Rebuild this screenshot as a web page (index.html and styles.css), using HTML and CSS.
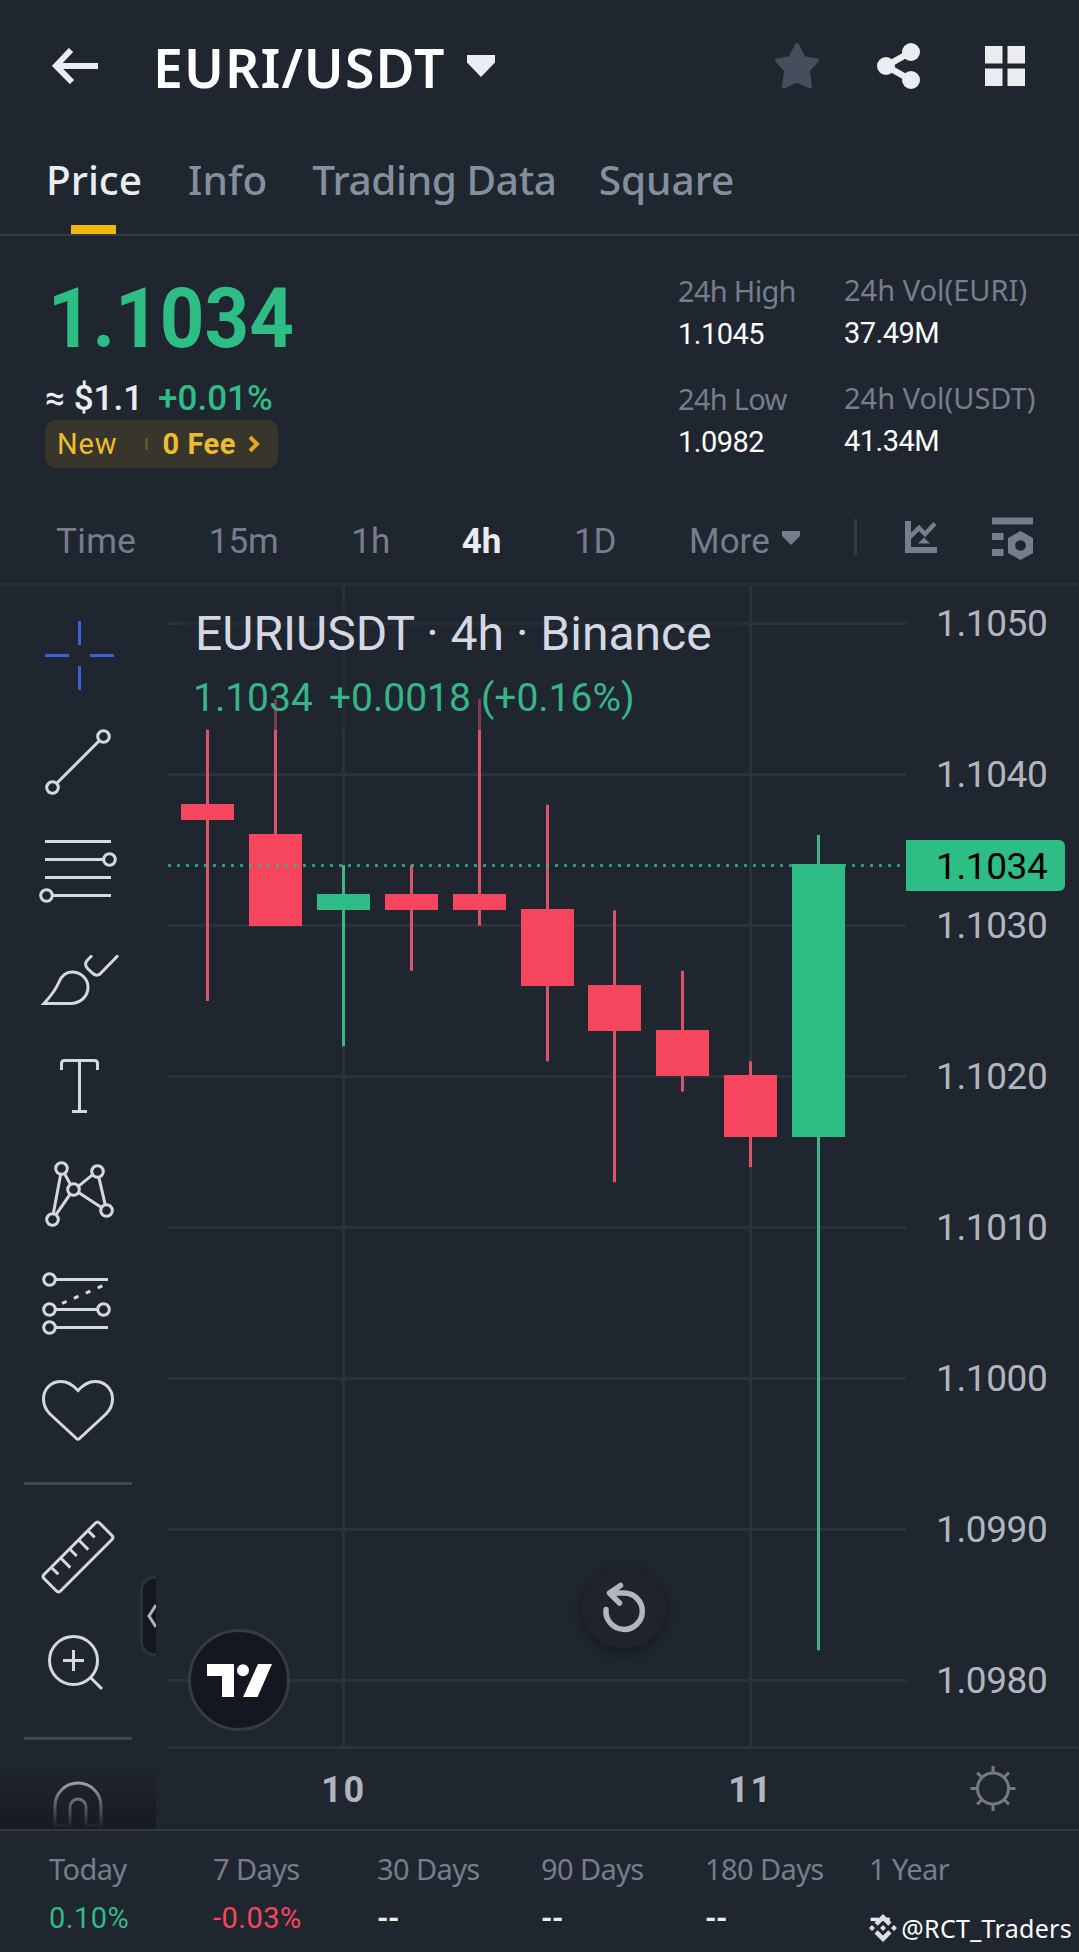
FILE: index.html
```
<!DOCTYPE html>
<html lang="en">
<head>
  <meta charset="UTF-8">
  <title>EURI/USDT</title>
  <link rel="stylesheet" href="styles.css">
</head>
<body>

  <header class="header">
    <svg class="back" width="46" height="36" viewBox="0 0 46 36">
      <path d="M19 2 L4 17.8 L20 34 M4 18 H46" fill="none" stroke="#eaecef" stroke-width="6"/>
    </svg>
    <h1>EURI/USDT</h1>
    <svg width="28" height="22" viewBox="0 0 28 22"><path d="M0 0h28v7.500L14 22 0 7.500z" fill="#eaecef"/></svg>
    <div class="actions">
      <svg width="44" height="46" viewBox="0 0 44 46">
        <path d="M22 2 L28.500 15 L42 17.500 L32.800 27.500 L35 43.500 L22 37.500 L9 43.500 L11.200 27.500 L2 17.500 L15.500 15Z" fill="#474d5c" stroke="#474d5c" stroke-width="4" stroke-linejoin="round"/>
      </svg>
      <svg width="43" height="46" viewBox="0 0 43 46">
        <path d="M34 9 L9 23 L34 37" fill="none" stroke="#eaecef" stroke-width="6.500"/>
        <circle cx="34" cy="9" r="9" fill="#eaecef"/>
        <circle cx="9" cy="23" r="9" fill="#eaecef"/>
        <circle cx="34" cy="37" r="9" fill="#eaecef"/>
      </svg>
      <svg class="grid-icon" width="40" height="40" viewBox="0 0 40 40">
        <path d="M0 0h17.500v17.500H0zM22.500 0H40v17.500H22.500zM0 22.500h17.500V40H0zM22.500 22.500H40V40H22.500z" fill="#eaecef"/>
      </svg>
    </div>
  </header>

  <nav class="tabs">
    <a class="active">Price</a>
    <a>Info</a>
    <a class="wide">Trading Data</a>
    <a>Square</a>
  </nav>

  <section class="summary">
    <div class="quote">
      <div class="last">1.1034</div>
      <div class="fiat"><span>≈ $1.1</span><span class="up">+0.01%</span></div>
      <div class="badge">
        <span class="badge-new">New</span>
        <i class="badge-sep"></i>
        <b>0 Fee</b>
        <svg width="12" height="18" viewBox="0 0 12 18"><path d="M2 2 L9 9 L2 16" fill="none" stroke="#e3a81d" stroke-width="4"/></svg>
      </div>
    </div>
    <div class="stats">
      <div class="stat"><label>24h High</label><b>1.1045</b></div>
      <div class="stat vol"><label>24h Vol(EURI)</label><b>37.49M</b></div>
      <div class="stat"><label>24h Low</label><b>1.0982</b></div>
      <div class="stat vol"><label>24h Vol(USDT)</label><b>41.34M</b></div>
    </div>
  </section>

  <div class="intervals">
    <a>Time</a>
    <a>15m</a>
    <a>1h</a>
    <a class="active">4h</a>
    <a>1D</a>
    <a class="more">More
      <svg width="18" height="14" viewBox="0 0 18 14"><path d="M0 0h18v5L9 14 0 5z" fill="#767d8c"/></svg>
    </a>
    <i class="divider"></i>
    <svg class="draw-icon" width="32" height="32" viewBox="0 0 32 32">
      <path d="M0 0h6v26h26v6H0z" fill="#767d8c"/>
      <path d="M5 16 L14 7 L20 13 L30 2.500" fill="none" stroke="#767d8c" stroke-width="4.500"/>
      <path d="M13 22.500 L19 16.500 L25 22.500z" fill="#767d8c"/>
    </svg>
    <svg class="settings-icon" width="41" height="43" viewBox="0 0 41 43">
      <path d="M0 .5h41v7H0zM0 16h11.500v7H0zM0 32h11.500v7H0z" fill="#767d8c"/>
      <path fill-rule="evenodd" d="M28.500 14 L41 21 V36 L28.500 43 L16 36 V21z M28.500 23.200a5.300 5.300 0 1 0 .01 0z" fill="#767d8c"/>
    </svg>
  </div>

  <main class="chart">
    <aside class="tools">
      <svg class="tool cross" viewBox="0 0 84 84"><path d="M43.500 9v24M43.500 54v24M9 43.500h24M54 43.500h24"/></svg>
      <svg class="tool" viewBox="0 0 84 84">
        <path d="M20.500 63.500 L63.500 20.500"/><circle cx="67.500" cy="16.500" r="5.800"/><circle cx="16.500" cy="67.500" r="5.800"/>
      </svg>
      <svg class="tool" viewBox="0 0 84 84">
        <path d="M9 13.500h66M9 31.500h58M9 49.500h66M17 67.500h58"/><circle cx="73.500" cy="31.500" r="5.800"/><circle cx="10.500" cy="67.500" r="5.800"/>
      </svg>
      <svg class="tool" viewBox="0 0 84 84">
        <path d="M8 67.500C14 61 20 53 23 46C26 39 30 36 36 36C45 36 52 43 52 51C52 60 45 67.500 34 67.500Z"/>
        <path d="M56 19.500l-3 3C48 27 49 30 52 33l5 4.500C60 40 63 39.500 65 37L82 19.500"/>
      </svg>
      <svg class="tool" viewBox="0 0 84 84">
        <path d="M25.500 26v-6.500q0-3 3-3h30q3 0 3 3V26M43.500 16.500V67M36 67.500h15"/>
      </svg>
      <svg class="tool" viewBox="0 0 84 84">
        <path d="M24.700 22.300 L17.300 61.700M28.500 21.500 L34.500 32.500M42.300 34.300 L56.700 22.700M34 42.300 L20 62.700M42.500 40.500 L65.500 55.500M62.800 25.200 L69.200 52.700"/>
        <circle cx="25.500" cy="16.500" r="5.800"/><circle cx="61.500" cy="19.500" r="5.800"/><circle cx="37.500" cy="37.500" r="5.800"/>
        <circle cx="16.500" cy="67.500" r="5.800"/><circle cx="70.500" cy="58.500" r="5.800"/>
      </svg>
      <svg class="tool" viewBox="0 0 84 84">
        <path d="M20 19.500h52M20 49.500h41M20 67.500h52"/>
        <path d="M26 43.500 L68 25" stroke-dasharray="5 8"/>
        <circle cx="13.500" cy="19.500" r="5.800"/><circle cx="13.500" cy="49.500" r="5.800"/><circle cx="13.500" cy="67.500" r="5.800"/><circle cx="67.500" cy="49.500" r="5.800"/>
      </svg>
      <svg class="tool" viewBox="0 0 84 84">
        <path d="M42 22.500C37 17 32 13.500 25 13.500C15 13.500 7.500 21 7.500 31C7.500 37 10 42 14 46L40.500 70.500q1.500 1.500 3 0L70 46C74 42 76.500 37 76.500 31C76.500 21 69 13.500 59 13.500C52 13.500 47 17 42 22.500Z"/>
      </svg>
      <hr>
      <svg class="tool" viewBox="0 0 84 84">
        <path d="M59.500 8 L8 59.500q-2 2 0 4L20.500 76q2 2 4 0L76 24.500q2-2 0-4L63.500 8q-2-2-4 0z"/>
        <path d="M15.700 52.700l6.600 6.600M25 43.300l9.300 9.300M34 34.300l6.700 6.700M43 25.300l9.300 9.300M52 15.700l6.700 6.700"/>
      </svg>
      <svg class="tool" viewBox="0 0 84 84">
        <circle cx="37.500" cy="37.500" r="24"/><path d="M54.500 54.500 L66 66M27 37.500h21M37.500 27v21"/>
      </svg>
      <hr>
      <svg class="tool" viewBox="0 0 84 84">
        <path d="M19 56V36a23 23 0 0 1 46 0V56H50V37a8 8 0 0 0-16 0V56Z"/>
      </svg>
      <div class="fade"></div>
      <div class="collapse">
        <svg width="12" height="24" viewBox="0 0 12 24"><path d="M10 1 L3 12 L10 23" fill="none" stroke="#b2b5be" stroke-width="3"/></svg>
      </div>
    </aside>

    <div class="plot">
      <svg id="chart" width="911" height="1243" viewBox="0 0 911 1243"></svg>
      <div class="legend">
        <div class="legend-title">EURIUSDT · 4h · Binance</div>
        <div class="legend-values"><span>1.1034</span><span>+0.0018</span><span class="pct">(+0.16%)</span></div>
      </div>
      <div class="tv-logo">
        <svg width="65" height="33" viewBox="0 0 65 33">
          <path d="M0 0h27v33H15V12H0zM51 0h14L50.500 33H36z" fill="#fff"/><circle cx="36" cy="6.200" r="6" fill="#fff"/>
        </svg>
      </div>
      <div class="reset">
        <svg width="84" height="84" viewBox="0 0 84 84">
          <path d="M24 44.500A18.200 18.200 0 1 0 42 28H29M38.500 20.500L27.500 28L37.500 38" fill="none" stroke="#b2b5be" stroke-width="5.500" stroke-linecap="round" stroke-linejoin="round"/>
        </svg>
      </div>
    </div>
  </main>

  <footer class="periods">
    <div><label>Today</label><span class="up">0.10%</span></div>
    <div><label>7 Days</label><span class="down">-0.03%</span></div>
    <div><label>30 Days</label><span class="empty">--</span></div>
    <div><label>90 Days</label><span class="empty">--</span></div>
    <div><label>180 Days</label><span class="empty">--</span></div>
    <div><label>1 Year</label><span class="empty">--</span></div>
    <div class="watermark">
      <svg width="28" height="28" viewBox="0 0 28 28" fill="#dcdee2">
        <path d="M14 0l8.500 8.500-3.200 3.200L14 6.400l-5.300 5.300-3.200-3.200zM14 28l8.500-8.500-3.200-3.200-5.300 5.300-5.300-5.300-3.200 3.200zM3 11l3 3-3 3-3-3zM25 11l3 3-3 3-3-3zM14 11l3 3-3 3-3-3z"/>
      </svg>
      @RCT_Traders
    </div>
  </footer>

  <script>
    const UP = "#2ebd85", DOWN = "#f6465d";
    // open, high, low, close
    const candles = [
      [1.1038, 1.1043, 1.1025, 1.1037],
      [1.1036, 1.1045, 1.1030, 1.1030],
      [1.1031, 1.1034, 1.1022, 1.1032],
      [1.1032, 1.1034, 1.1027, 1.1031],
      [1.1032, 1.1045, 1.1030, 1.1031],
      [1.1031, 1.1038, 1.1021, 1.1026],
      [1.1026, 1.1031, 1.1013, 1.1023],
      [1.1023, 1.1027, 1.1019, 1.1020],
      [1.1020, 1.1021, 1.1014, 1.1016],
      [1.1016, 1.1036, 1.0982, 1.1034]
    ];
    const days = [["10", 2], ["11", 8]];
    const last = 1.1034;

    const y = p => 37.5 + (1.105 - p) * 151000;
    const x = i => Math.round(39 + i * 67.9) + 0.5;
    let out = "";

    // grid
    for (let p = 11050; p >= 10980; p -= 10) {
      const gy = y(p / 10000);
      out += `<path class="grid" d="M0 ${gy}H738"/>`;
      out += `<text class="price" x="768" y="${gy + 12.5}">${(p / 10000).toFixed(4)}</text>`;
    }
    days.forEach(([label, i]) => {
      out += `<path class="grid" d="M${x(i)} 0V1161"/>`;
      out += `<text class="day" x="${x(i)}" y="1216">${label}</text>`;
    });
    out += `<path class="grid" d="M0 1161.5H911"/>`;

    // candles
    candles.forEach(([o, h, l, c], i) => {
      const up = c > o;
      const top = Math.round(y(Math.max(o, c))) - 1;
      const bottom = Math.round(y(Math.min(o, c)));
      out += `<rect x="${x(i) - 1.5}" y="${y(h)}" width="3" height="${y(l) - y(h)}" fill="${up ? "#3fb588" : "#d9566a"}"/>`;
      out += `<rect x="${x(i) - 26.5}" y="${top}" width="53" height="${bottom - top}" fill="${up ? UP : DOWN}"/>`;
    });

    // last price
    out += `<path class="last-line" d="M0 ${y(last) + 0.4}H735"/>`;
    out += `<path d="M738 254h153a6 6 0 0 1 6 6v39a6 6 0 0 1-6 6H738z" fill="${UP}"/>`;
    out += `<text class="price current" x="768" y="293">${last}</text>`;

    // axis settings
    out += `<g class="sun" transform="translate(825 1202.500)"><circle r="15.500"/>`;
    for (let a = 0; a < 360; a += 45) {
      out += `<path d="M0 -16V-22.500" transform="rotate(${a})"/>`;
    }
    out += `</g>`;

    document.getElementById("chart").innerHTML = out;
  </script>

</body>
</html>
```
FILE: styles.css
```
* {
  box-sizing: border-box;
}

body {
  margin: 0;
  width: 1079px;
  height: 1952px;
  overflow: hidden;
  background: #1f262f;
  color: #eaecef;
  font-family: Roboto, sans-serif;
}

svg {
  display: block;
  flex: none;
}

.up { color: #2ebd85; }
.down { color: #f6465d; }

/* header */

.header {
  display: flex;
  align-items: center;
  height: 132px;
  padding: 0 54px 0 52px;
}

.header h1 {
  margin: 3px 21px 0 55px;
  font: 600 53.5px/60px "Noto Sans", sans-serif;
  letter-spacing: 1.1px;
  color: #fff;
}

.actions {
  display: flex;
  align-items: center;
  gap: 58px;
  margin-left: auto;
}

.grid-icon {
  margin-left: 7px;
}

/* tabs */

.tabs {
  display: flex;
  gap: 46px;
  height: 104px;
  padding-left: 46px;
  border-bottom: 2px solid #343b46;
}

.tabs a {
  position: relative;
  font: 500 40.6px/96px "Noto Sans", sans-serif;
  color: #848e9c;
}

.tabs .wide {
  margin: 0 -4px 0 -1px;
  letter-spacing: -0.4px;
}

.tabs .active {
  color: #eaecef;
}

.tabs .active::after {
  content: "";
  position: absolute;
  left: 25px;
  bottom: 0;
  width: 45px;
  height: 9px;
  background: #f0b90b;
}

/* price summary */

.summary {
  display: flex;
  justify-content: space-between;
  height: 262px;
  padding: 30px 0 0 45px;
}

.last {
  font-size: 84px;
  font-weight: 700;
  line-height: 106px;
  color: #2ebd85;
  transform: scaleX(0.928);
  transform-origin: 0 0;
  padding-left: 3px;
}

.fiat {
  display: flex;
  gap: 15px;
  padding-top: 5px;
  font-size: 35px;
  font-weight: 500;
  line-height: 43px;
}

.badge {
  display: flex;
  align-items: center;
  width: 233px;
  height: 48px;
  padding-left: 12px;
  border-radius: 10px;
  background: #37352c;
  color: #edbd2f;
  font-size: 29px;
}

.badge-new {
  letter-spacing: 0.9px;
}

.badge-sep {
  width: 3px;
  height: 12px;
  margin: 0 15px 0 27px;
  background: #655325;
}

.badge b {
  margin-right: 12px;
  letter-spacing: 0.5px;
}

.stats {
  display: grid;
  grid-template-columns: 166px 235px;
  grid-auto-rows: 108px;
  padding-top: 3px;
}

.stat label,
.stat b {
  display: block;
  line-height: 43px;
}

.stat label {
  font-family: "Noto Sans", sans-serif;
  font-size: 29px;
  letter-spacing: -0.7px;
  color: #767d8c;
}

.stat b {
  padding-top: 1px;
  font-size: 29px;
  font-weight: 400;
  letter-spacing: -0.5px;
  color: #fff;
}

.stat.vol {
  margin-top: -1px;
}

.stat.vol label {
  letter-spacing: 0;
}

/* interval bar */

.intervals {
  display: flex;
  align-items: center;
  gap: 72.5px;
  height: 85px;
  padding: 2px 0 0 56px;
  font-size: 35px;
  color: #767d8c;
}

.intervals a:first-child {
  letter-spacing: 0.4px;
}

.intervals .active {
  margin-left: -1px;
  font-weight: 700;
  color: #eaecef;
}

.intervals .more {
  display: flex;
  align-items: center;
  gap: 12px;
}

.intervals .more svg {
  margin-top: -8px;
}

.intervals .divider {
  width: 3px;
  height: 36px;
  margin: -10px 0 0 -18px;
  background: #343b46;
}

.draw-icon {
  margin: -9px 0 0 -25px;
}

.settings-icon {
  margin: -7px 0 0 -17px;
}

/* chart */

.chart {
  display: flex;
  gap: 12px;
  height: 1246px;
  border-top: 3px solid #272d37;
}

.tools {
  position: relative;
  width: 156px;
  height: 1243px;
  padding-top: 14px;
  overflow: hidden;
}

.tool {
  width: 84px;
  height: 84px;
  margin: 12px 0 24px 36px;
  fill: none;
  stroke: #d5d8e2;
  stroke-width: 3;
}

.tool.cross {
  stroke: #3861e0;
}

.tools hr {
  width: 108px;
  height: 3px;
  margin: 30px 0 30px 24px;
  border: 0;
  background: #434651;
}

.fade {
  position: absolute;
  left: 0;
  right: 0;
  bottom: 0;
  height: 66px;
  background: linear-gradient(rgba(23, 26, 37, 0), #171a25);
}

.collapse {
  position: absolute;
  right: 0;
  top: 990px;
  display: flex;
  align-items: center;
  width: 16px;
  height: 80px;
  padding-left: 3px;
  border: 3px solid #2b303b;
  border-right: 0;
  border-radius: 14px 0 0 14px;
  background: #131722;
}

.plot {
  position: relative;
}

.grid {
  stroke: #2b323c;
  stroke-width: 3;
}

.price {
  font-size: 37px;
  letter-spacing: -0.4px;
  fill: #b2b5be;
}

.price.current {
  fill: #000;
}

.day {
  font-size: 36px;
  font-weight: 700;
  letter-spacing: 1.5px;
  text-anchor: middle;
  fill: #b2b5be;
}

.last-line {
  stroke: #2ebd85;
  stroke-width: 3;
  stroke-dasharray: 3 6;
  opacity: 0.8;
}

.sun {
  fill: none;
  stroke: #767985;
  stroke-width: 3;
}

.legend {
  position: absolute;
  left: 13px;
  top: 16px;
}

.legend-title {
  width: 561px;
  padding-left: 14px;
  background: rgba(31, 38, 47, 0.5);
  font-size: 48px;
  line-height: 64px;
  color: #d5d8e2;
}

.legend-values {
  display: flex;
  gap: 16px;
  width: 470px;
  height: 64px;
  padding-left: 12px;
  background: rgba(31, 38, 47, 0.5);
  font-size: 39px;
  line-height: 65px;
  color: #38b586;
}

.legend-values .pct {
  margin-left: -6px;
}

.tv-logo {
  position: absolute;
  left: 20px;
  top: 1043px;
  display: flex;
  align-items: center;
  justify-content: center;
  width: 102px;
  height: 102px;
  border: 3px solid #363a45;
  border-radius: 50%;
  background: #131722;
}

.reset {
  position: absolute;
  left: 414px;
  top: 979px;
  border-radius: 50%;
  background: #1f232e;
  box-shadow: 0 5px 10px rgba(10, 12, 20, 0.45);
}

/* period returns */

.periods {
  position: relative;
  display: grid;
  grid-template-columns: repeat(6, 164px);
  height: 123px;
  padding: 13px 0 0 49px;
  border-top: 2px solid #313843;
  font-size: 29px;
  line-height: 50px;
}

.periods label {
  display: block;
  font-family: "Noto Sans", sans-serif;
  line-height: 49px;
  letter-spacing: -0.6px;
  color: #767d8c;
}

.periods span {
  letter-spacing: 0.5px;
}

.periods .empty {
  font-weight: 700;
  letter-spacing: -0.5px;
}

.watermark {
  position: absolute;
  right: 7px;
  bottom: 8px;
  display: flex;
  align-items: center;
  gap: 4px;
  font: 25px/32px "Noto Sans", sans-serif;
  letter-spacing: 0.3px;
  color: #fff;
}
```
